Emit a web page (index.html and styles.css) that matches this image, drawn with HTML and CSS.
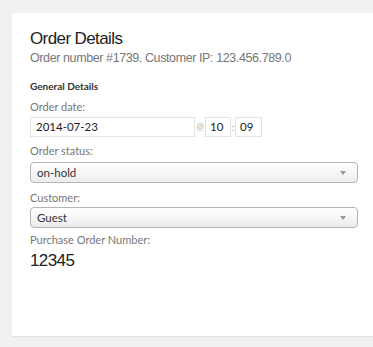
FILE: index.html
```html
<!DOCTYPE html>
<html>
<head>
<meta charset="utf-8">
<link rel="stylesheet" href="styles.css">
</head>
<body>
<div class="panel">
  <h2 class="title">Order Details</h2>
  <p class="sub">Order number #1739. Customer IP: 123.456.789.0</p>
  <h4 class="section">General Details</h4>
  <div class="field field-date">
    <label class="lbl">Order date:</label>
    <div class="daterow">
      <div class="input date">2014-07-23</div>
      <span class="at">@</span>
      <div class="input small">10</div>
      <span class="colon">:</span>
      <div class="input small">09</div>
    </div>
  </div>
  <div class="field field-status">
    <label class="lbl">Order status:</label>
    <div class="select"><span>on-hold</span><span class="arrow"></span></div>
  </div>
  <div class="field field-customer">
    <label class="lbl">Customer:</label>
    <div class="select select-tight"><span>Guest</span><span class="arrow"></span></div>
  </div>
  <div class="field field-po">
    <label class="lbl">Purchase Order Number:</label>
    <div class="po">12345</div>
  </div>
</div>
</body>
</html>
```

FILE: styles.css
```css
html, body { margin: 0; padding: 0; }
body {
  background: #f1f1f1;
  width: 373px;
  height: 347px;
  overflow: hidden;
  font-family: "Liberation Sans", Arial, sans-serif;
}
.panel {
  margin: 13px 0 0 12px;
  width: 361px;
  height: 323px;
  background: #fff;
  box-shadow: 0 1px 1px rgba(0,0,0,0.06);
  padding: 16px 0 0 18px;
  box-sizing: border-box;
}
.title {
  margin: 0;
  font-weight: normal;
  font-size: 17px;
  letter-spacing: -0.6px;
  line-height: 20px;
  color: #222;
}
.sub {
  margin: 1px 0 0;
  font-size: 12.5px;
  letter-spacing: -0.4px;
  line-height: 16px;
  color: #777;
}
.section {
  margin: 13px 0 0;
  font-family: Lato, sans-serif;
  font-weight: 700;
  font-size: 10px;
  line-height: 14px;
  color: #333;
}
.field-date { margin-top: 7px; }
.field-status { margin-top: 7px; }
.field-customer { margin-top: 8px; }
.field-po { margin-top: 5px; }
.lbl {
  display: block;
  font-family: Lato, sans-serif;
  font-size: 11px;
  line-height: 14px;
  color: #777;
}
.daterow {
  display: flex;
  align-items: center;
  margin-top: 3px;
}
.input {
  box-sizing: border-box;
  height: 20px;
  border: 1px solid #e3e3e3;
  font-family: Lato, sans-serif;
  font-size: 11.5px;
  line-height: 18px;
  color: #222;
  padding-left: 5px;
}
.date { width: 165px; }
.small { width: 26px; padding-left: 4px; }
.small:last-child { width: 27px; }
.at {
  font-size: 8.5px;
  color: #aaa;
  width: 10px;
  text-align: center;
  font-family: Lato, sans-serif;
}
.colon {
  font-size: 10px;
  color: #999;
  width: 4px;
  text-align: center;
  font-family: Lato, sans-serif;
}
.select {
  box-sizing: border-box;
  margin-top: 4px;
  width: 328px;
  height: 21px;
  border: 1px solid #b5b5b5;
  border-radius: 4px;
  background: linear-gradient(#ffffff 0%, #f6f6f6 50%, #ececec 100%);
  display: flex;
  align-items: center;
  justify-content: space-between;
  padding: 0 11px 0 6px;
  font-family: Lato, sans-serif;
  font-size: 11.5px;
  color: #333;
}
.select-tight { margin-top: 2px; }
.arrow {
  width: 0; height: 0;
  border-left: 3px solid transparent;
  border-right: 3px solid transparent;
  border-top: 4px solid #999;
}
.po {
  margin-top: 4px;
  font-size: 17px;
  letter-spacing: -0.6px;
  line-height: 20px;
  color: #222;
}
```
